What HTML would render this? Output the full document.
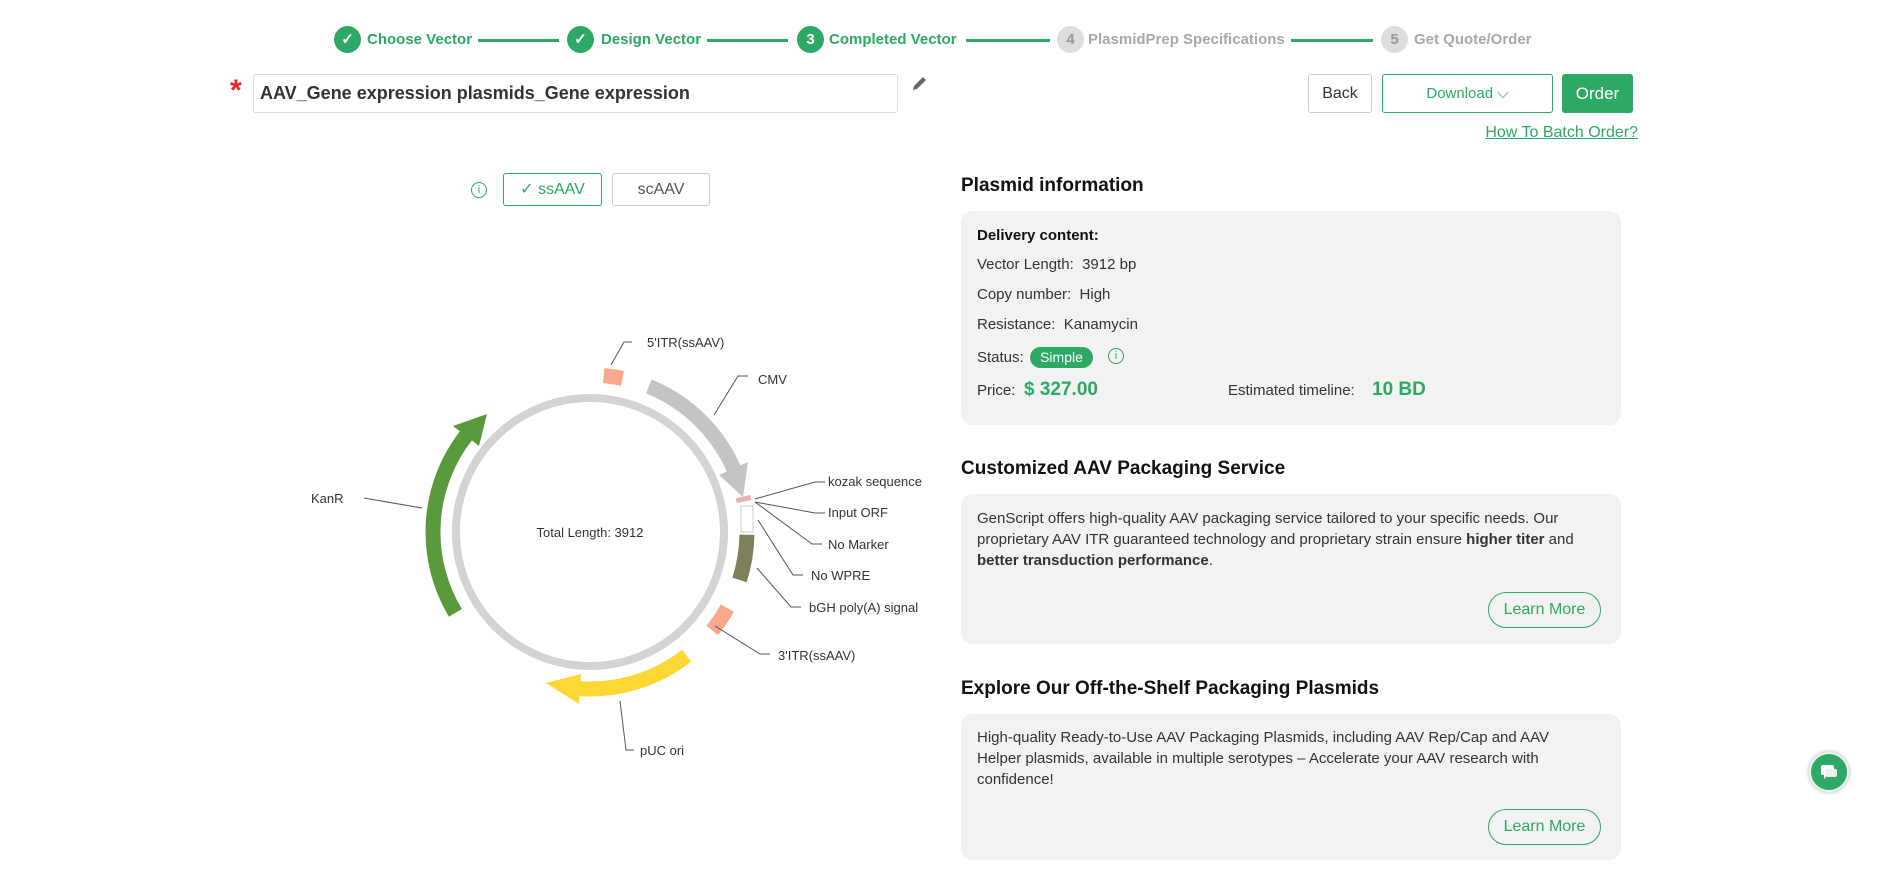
<!DOCTYPE html>
<html><head><meta charset="utf-8"><style>
*{box-sizing:border-box;margin:0;padding:0}
body{width:1882px;height:892px;background:#fff;font-family:"Liberation Sans",sans-serif;color:#222;position:relative;overflow:hidden}
.a{position:absolute;white-space:nowrap}
.sc{position:absolute;width:27px;height:27px;border-radius:50%;background:#2ea865;color:#fff;font-weight:bold;font-size:15px;text-align:center;line-height:27px}
.sc.g{background:#ddd;color:#999}
.st{position:absolute;font-weight:bold;font-size:15px;color:#2ea865;top:31px}
.st.g{color:#a8a8a8}
.ln{position:absolute;height:3px;background:#2ea865;top:39px}
.btn{position:absolute;border:1px solid #ccc;border-radius:3px;font-size:16px;text-align:center}
.box{position:absolute;left:961px;width:660px;background:#f2f2f2;border-radius:12px}
h3{position:absolute;left:961px;font-size:19px;font-weight:bold;color:#111}
.row{position:absolute;left:977px;font-size:15px;color:#333}
.lm{position:absolute;left:1488px;width:113px;height:36px;border:1px solid #2ea865;border-radius:18px;color:#2ea865;font-size:16px;text-align:center;line-height:34px}
.p{position:absolute;left:977px;width:635px;font-size:15px;line-height:21px;color:#333}
</style></head><body>
<div class="sc" style="left:334px;top:26px">✓</div><div class="st" style="left:367px">Choose Vector</div>
<div class="ln" style="left:478px;width:81px"></div>
<div class="sc" style="left:567px;top:26px">✓</div><div class="st" style="left:601px">Design Vector</div>
<div class="ln" style="left:707px;width:81px"></div>
<div class="sc" style="left:797px;top:26px">3</div><div class="st" style="left:829px">Completed Vector</div>
<div class="ln" style="left:966px;width:84px"></div>
<div class="sc g" style="left:1057px;top:26px">4</div><div class="st g" style="left:1088px">PlasmidPrep Specifications</div>
<div class="ln" style="left:1291px;width:82px"></div>
<div class="sc g" style="left:1381px;top:26px">5</div><div class="st g" style="left:1414px">Get Quote/Order</div>

<div class="a" style="left:230px;top:74px;color:#e22;font-size:30px;font-weight:bold">*</div>
<div class="a" style="left:253px;top:74px;width:645px;height:39px;border:1px solid #ddd;border-radius:3px;font-weight:bold;font-size:18px;line-height:37px;padding-left:6px;color:#333">AAV_Gene expression plasmids_Gene expression</div>
<svg class="a" style="left:910px;top:73px" width="20" height="20" viewBox="0 0 20 20"><path d="M3 17l1-4 9-9 3 3-9 9z" fill="#666"/></svg>
<div class="btn" style="left:1308px;top:74px;width:64px;height:39px;line-height:37px;color:#333">Back</div>
<div class="btn" style="left:1382px;top:74px;width:171px;height:39px;line-height:37px;border-color:#2ea865;color:#2ea865;font-size:15px">Download ⌵</div>
<div class="btn" style="left:1562px;top:74px;width:71px;height:39px;line-height:39px;background:#2ea865;border:none;color:#fff;font-size:17px">Order</div>
<div class="a" style="right:244px;top:124px;color:#2ea865;font-size:16px;text-decoration:underline">How To Batch Order?</div>

<div class="a" style="left:471px;top:182px;width:16px;height:16px;border:1px solid #2ea865;border-radius:50%;color:#2ea865;font-size:11px;text-align:center;line-height:14px">i</div>
<div class="btn" style="left:503px;top:173px;width:99px;height:33px;line-height:31px;border-color:#2ea865;color:#2ea865">✓ ssAAV</div>
<div class="btn" style="left:612px;top:173px;width:98px;height:33px;line-height:31px;color:#555">scAAV</div>

<svg class="a" style="left:0;top:0" width="960" height="892">
<circle cx="590" cy="532" r="134" fill="none" stroke="#d3d3d3" stroke-width="8"/>
<g fill="none" stroke-width="15">
<circle cx="590" cy="532" r="157" stroke="#f9a98a" stroke-dasharray="19 2000" transform="rotate(-85 590 532)"/>
<circle cx="590" cy="532" r="157" stroke="#c4c4c4" stroke-dasharray="122 2000" transform="rotate(-68 590 532)"/>
<circle cx="590" cy="532" r="157" stroke="#e8b0b0" stroke-dasharray="5 2000" transform="rotate(-13 590 532)"/>
<circle cx="590" cy="532" r="157" stroke="#7d8059" stroke-dasharray="46 2000" transform="rotate(1 590 532)"/>
<circle cx="590" cy="532" r="157" stroke="#f9a98a" stroke-dasharray="27 2000" transform="rotate(29 590 532)"/>
<circle cx="590" cy="532" r="157" stroke="#fdd835" stroke-dasharray="119 2000" transform="rotate(52 590 532)"/>
<circle cx="590" cy="532" r="157" stroke="#5a9a3a" stroke-dasharray="190 2000" transform="rotate(149 590 532)"/>
</g>
<rect x="741" y="506" width="12" height="26" fill="#fff" stroke="#ccc"/>
<polygon points="719,475 748,462 743,497" fill="#c4c4c4"/>
<polygon points="479,446 453,426 487,414" fill="#5a9a3a"/>
<polygon points="581,674 579,704 546,683" fill="#fdd835"/>
<g stroke="#555" stroke-width="1" fill="none">
<polyline points="611,365 624,342 632,342"/>
<polyline points="714,415 738,376 748,376"/>
<polyline points="755,499 815,482 825,482"/>
<polyline points="755,502 815,513 825,513"/>
<polyline points="755,502 812,544 822,544"/>
<polyline points="758,520 793,575 803,575"/>
<polyline points="757,568 791,607 801,607"/>
<polyline points="715,626 760,654 770,654"/>
<polyline points="620,701 626,750 634,750"/>
<polyline points="364,498 422,508"/>
</g>
<g font-size="13" fill="#333" font-family="Liberation Sans,sans-serif">
<text x="647" y="347">5'ITR(ssAAV)</text>
<text x="758" y="384">CMV</text>
<text x="828" y="486">kozak sequence</text>
<text x="828" y="517">Input ORF</text>
<text x="828" y="549">No Marker</text>
<text x="811" y="580">No WPRE</text>
<text x="809" y="612">bGH poly(A) signal</text>
<text x="778" y="660">3'ITR(ssAAV)</text>
<text x="640" y="755">pUC ori</text>
<text x="311" y="503">KanR</text>
<text x="590" y="537" text-anchor="middle">Total Length: 3912</text>
</g>
</svg>

<h3 style="top:175px">Plasmid information</h3>
<div class="box" style="top:211px;height:214px"></div>
<div class="row" style="top:227px;font-weight:bold;color:#111">Delivery content:</div>
<div class="row" style="top:256px">Vector Length: &nbsp;3912 bp</div>
<div class="row" style="top:286px">Copy number: &nbsp;High</div>
<div class="row" style="top:316px">Resistance: &nbsp;Kanamycin</div>
<div class="row" style="top:349px">Status:</div>
<div class="a" style="left:1030px;top:347px;width:63px;height:21px;border-radius:11px;background:#2ea865;color:#fff;font-size:14px;text-align:center;line-height:21px">Simple</div>
<div class="a" style="left:1108px;top:348px;width:16px;height:16px;border:1px solid #2ea865;border-radius:50%;color:#2ea865;font-size:11px;text-align:center;line-height:14px">i</div>
<div class="row" style="top:382px">Price:</div>
<div class="a" style="left:1024px;top:379px;color:#2ea865;font-weight:bold;font-size:19px">$ 327.00</div>
<div class="a" style="left:1228px;top:382px;font-size:15px;color:#333">Estimated timeline:</div>
<div class="a" style="left:1372px;top:379px;color:#2ea865;font-weight:bold;font-size:19px">10 BD</div>

<h3 style="top:458px">Customized AAV Packaging Service</h3>
<div class="box" style="top:494px;height:150px"></div>
<div class="p" style="top:508px">GenScript offers high-quality AAV packaging service tailored to your specific needs. Our proprietary AAV ITR guaranteed technology and proprietary strain ensure <b>higher titer</b> and <b>better transduction performance</b>.</div>
<div class="lm" style="top:592px">Learn More</div>

<h3 style="top:678px">Explore Our Off-the-Shelf Packaging Plasmids</h3>
<div class="box" style="top:714px;height:146px"></div>
<div class="p" style="top:727px">High-quality Ready-to-Use AAV Packaging Plasmids, including AAV Rep/Cap and AAV<br>Helper plasmids, available in multiple serotypes – Accelerate your AAV research with<br>confidence!</div>
<div class="lm" style="top:809px">Learn More</div>

<div class="a" style="left:1809px;top:752px;width:40px;height:40px;border-radius:50%;background:#2ea865;border:2px solid #e8f5ec;box-shadow:0 0 4px #aaa"></div>
<svg class="a" style="left:1819px;top:762px" width="20" height="20" viewBox="0 0 20 20"><rect x="2" y="3" width="13" height="10" rx="2" fill="#fff"/><path d="M5 13l0 4 4-4z" fill="#fff"/><rect x="7" y="7" width="11" height="8" rx="2" fill="#e6f2ea"/></svg>
</body></html>
